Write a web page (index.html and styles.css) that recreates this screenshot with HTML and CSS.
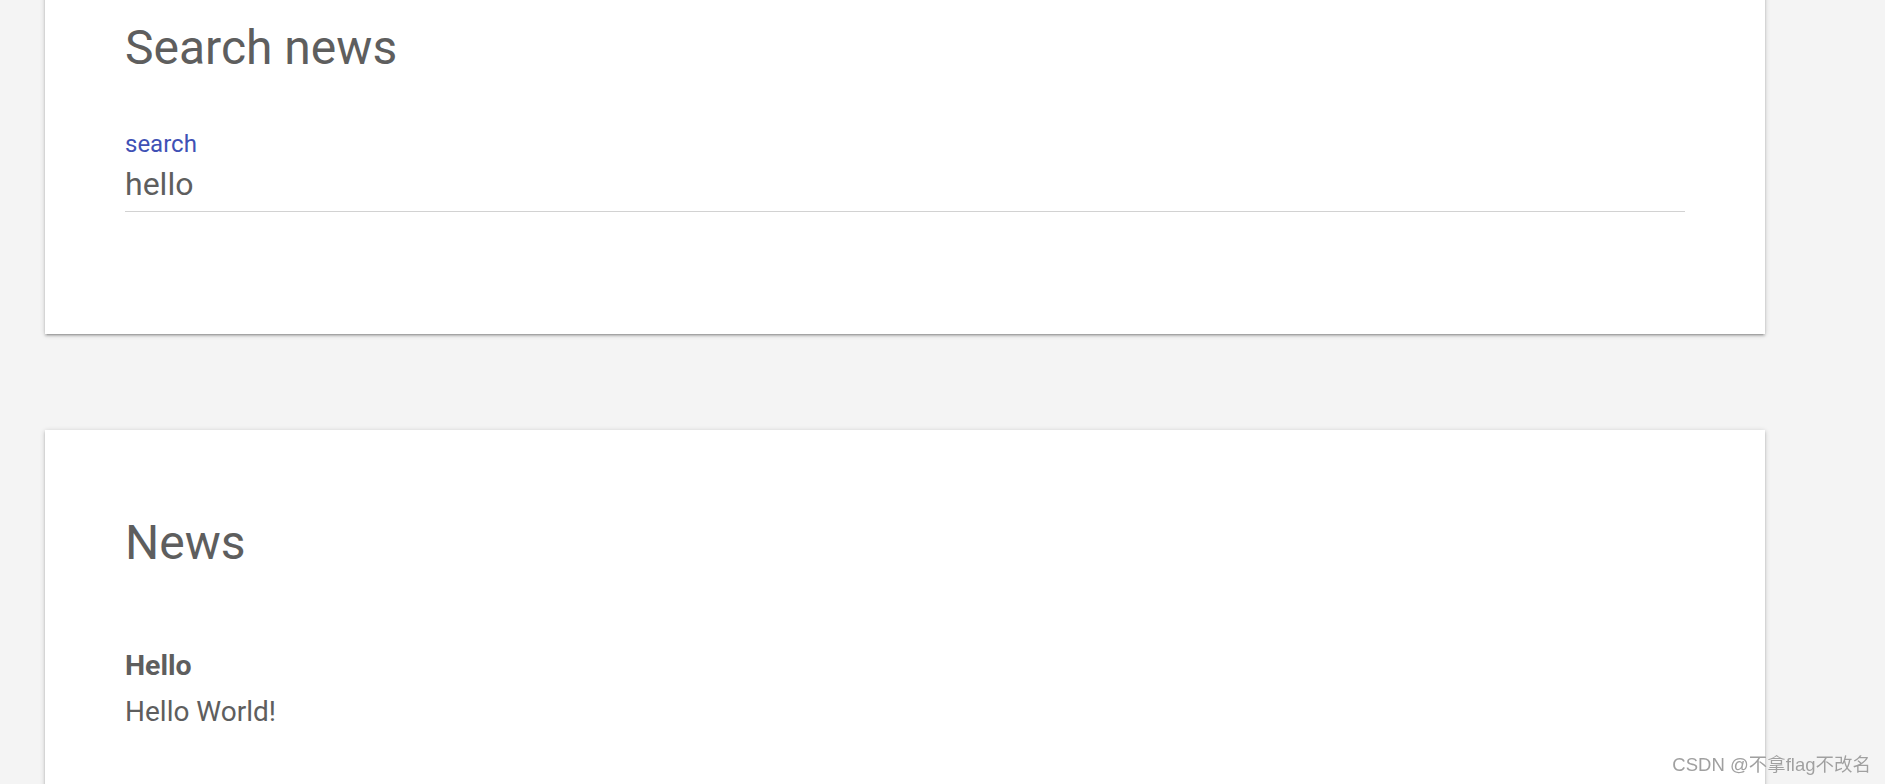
FILE: index.html
```html
<!DOCTYPE html>
<html lang="en">
<head>
<meta charset="utf-8">
<title>News</title>
<link rel="stylesheet" href="styles.css">
</head>
<body>
<main class="page">
  <section class="card card-search">
    <h4 class="card-title">Search news</h4>
    <div class="field">
      <label class="field-label" for="q">search</label>
      <input class="field-input" id="q" type="text" value="hello">
    </div>
  </section>
  <section class="card card-news">
    <h4 class="card-title">News</h4>
    <article class="news-item">
      <div class="news-title">Hello</div>
      <div class="news-body">Hello World!</div>
    </article>
  </section>
</main>
<div class="watermark">CSDN @不拿flag不改名</div>
</body>
</html>
```
FILE: styles.css
```css
html, body {
  margin: 0;
  padding: 0;
  overflow: hidden;
  height: 100%;
}
body {
  background: #f4f4f4;
  font-family: Roboto, "Noto Sans", sans-serif;
  color: #5e5e5e;
}
.page {
  display: flex;
  flex-direction: column;
  gap: 96px;
  width: 1720px;
  margin: -20px 0 0 45px;
}
.card {
  background: #fff;
  padding: 39px 80px 0 80px;
  box-shadow: 0 2px 2px 0 rgba(0,0,0,.14), 0 3px 1px -2px rgba(0,0,0,.12), 0 1px 5px 0 rgba(0,0,0,.2);
}
.card-search {
  height: 354px;
  box-sizing: border-box;
}
.card-news {
  padding-top: 84px;
  height: 500px;
  box-sizing: border-box;
}
.card-title {
  margin: 0;
  font-size: 48px;
  line-height: 58px;
  font-weight: 400;
  color: #5e5e5e;
}
.field {
  display: flex;
  flex-direction: column;
  margin-top: 53px;
}
.field-label {
  font-size: 24px;
  line-height: 28px;
  color: #3f51b5;
  margin-bottom: 7px;
}
.field-input {
  font-family: Roboto, "Noto Sans", sans-serif;
  font-size: 32px;
  line-height: 38px;
  height: 38px;
  color: #5e5e5e;
  border: none;
  border-bottom: 1px solid #d2d2d2;
  padding: 0 0 8px 0;
  margin: 0;
  outline: none;
  background: transparent;
  box-sizing: content-box;
  width: 100%;
}
.news-item {
  margin-top: 71px;
}
.news-title {
  font-size: 28.5px;
  line-height: 46px;
  font-weight: 700;
}
.news-body {
  font-size: 28px;
  line-height: 46px;
}
.watermark {
  position: fixed;
  right: 14px;
  bottom: 8px;
  font-family: "Liberation Sans", "Noto Sans CJK SC", sans-serif;
  font-size: 18.5px;
  color: #a0a0a0;
  text-shadow: 0 0 1px #fff;
}
```
